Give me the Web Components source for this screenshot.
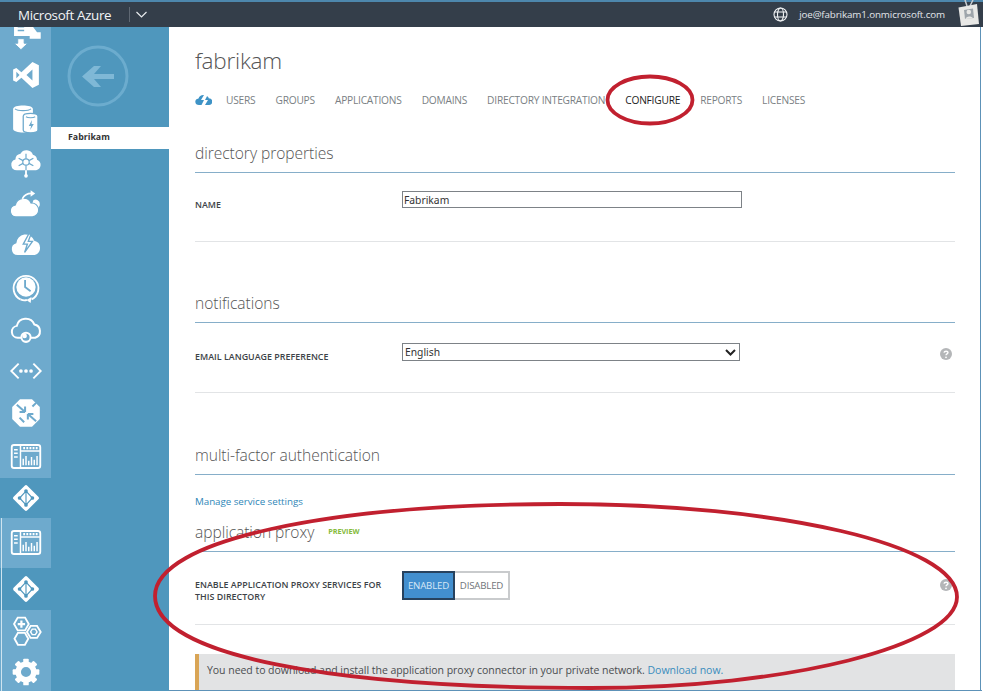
<!DOCTYPE html>
<html>
<head>
<meta charset="utf-8">
<title>fabrikam</title>
<style>
  html, body { margin: 0; padding: 0; height: 100%; overflow: hidden; background: #fff; }
  body { font-family: "Open Sans", "Noto Sans", sans-serif; color: #444; }
</style>
</head>
<body>
<az-portal>
  <az-topbar slot="top" email="joe@fabrikam1.onmicrosoft.com"></az-topbar>
  <az-rail slot="rail"></az-rail>
  <az-subnav slot="nav" current="Fabrikam"></az-subnav>

  <az-title>fabrikam</az-title>
  <az-tabs active="CONFIGURE" items="USERS,GROUPS,APPLICATIONS,DOMAINS,DIRECTORY INTEGRATION,CONFIGURE,REPORTS,LICENSES"></az-tabs>

  <az-section heading="directory properties" gap="33">
    <az-row label="NAME" height="69" pad="18">
      <az-field value="Fabrikam"></az-field>
    </az-row>
  </az-section>

  <az-section heading="notifications" gap="51">
    <az-row label="EMAIL LANGUAGE PREFERENCE" height="70" pad="20" help="2">
      <az-field value="English" select></az-field>
    </az-row>
  </az-section>

  <az-section heading="multi-factor authentication" gap="52">
    <az-link>Manage service settings</az-link>
  </az-section>

  <az-section heading="application proxy" gap="10" preview>
    <az-row label="ENABLE APPLICATION PROXY SERVICES FOR THIS DIRECTORY" height="73" pad="19" help="8">
      <az-toggle on="ENABLED" off="DISABLED"></az-toggle>
    </az-row>
  </az-section>

  <az-banner>You need to download and install the application proxy connector in your private network. <a>Download now.</a></az-banner>

  <az-annotations slot="over"></az-annotations>
</az-portal>

<script>
// icons for the left rail, drawn on a 34x34 box
const dash = `<rect x="1.500" y="4" width="31" height="25" rx="2.500" fill="none" stroke="#fff" stroke-width="2"/>
  <path d="M11 4v25M11 10.500h21" stroke="#fff" stroke-width="1.600" fill="none"/>
  <path d="M14 7.300h16" stroke="#fff" stroke-width="2.400" stroke-dasharray="2 1.400"/>
  <path d="M4 9h4M4 13h4M4 17h4M14 26v-7M17 26v-10M20 26v-5M23 26v-9M26 26v-6M29 26v-10" stroke="#fff" stroke-width="1.600"/>`;
const diamond = `<rect x="6.500" y="6.500" width="21" height="21" rx="2" transform="rotate(45 17 17)" fill="#fff"/>
  <path d="M17 9.500L10 17 17 24.500 24 17ZM17 9.500V24.500" fill="none" stroke="#4f97bd" stroke-width="1.200"/>
  <circle cx="17" cy="9.500" r="2" fill="#4f97bd"/><circle cx="10" cy="17" r="2" fill="#4f97bd"/>
  <circle cx="24" cy="17" r="2" fill="#4f97bd"/><circle cx="17" cy="24.500" r="2" fill="#4f97bd"/>`;
const ICONS = {
  deploy: `<path d="M4 -3h15v9h4l6 8h4v7H21v-3H4z" fill="#fff"/><path d="M8 4h7M8 8h7M8 12h7" stroke="#6eaacd" stroke-width="1.600"/>
    <path d="M8 21h7v5h4l-7.500 7L4 26h4z" fill="#fff" stroke="#6eaacd" stroke-width="1"/>`,
  vs: `<path fill-rule="evenodd" fill="#fff" d="M24 3l7 3.500v21L24 31 12 20l-5.500 4.500L3 23V11l3.500-1.500L12 14zM24 11l-6.500 6 6.500 6zM6.500 13.500v7L10 17z"/>`,
  db: `<path d="M3 6c0-5 21.500-5 21.500 0v22c0 5-21.500 5-21.500 0z" fill="#fff"/><path d="M5 6c3 2.500 14.500 2.500 17.500 0" stroke="#6eaacd" fill="none" stroke-width="1.200"/>
    <path d="M14 14c0-4 16-4 16 0v15c0 4-16 4-16 0z" fill="#fff" stroke="#6eaacd" stroke-width="1.400"/>
    <path d="M17 14.500c2 1.500 8 1.500 10 0" stroke="#6eaacd" fill="none" stroke-width="1.200"/><path d="M23.500 18l-3.500 6.500h2.500l-1 4.500 4-6.500H23z" fill="#6eaacd"/>`,
  hub: `<path d="M7 26a6 6 0 0 1-1.500-11.800A6.500 6.500 0 0 1 11 8 7.500 7.500 0 0 1 24.500 9 6 6 0 0 1 29 14.500 6 6 0 0 1 28 26z" fill="#fff"/>
    <g stroke="#6eaacd" stroke-width="1.300" fill="none"><circle cx="17" cy="17" r="3.500"/><path d="M17 13.500V8M17 20.500V26M13.800 15.500L9 13M20.200 15.500L25 13M13.800 18.500L9 21M20.200 18.500L25 21"/></g>
    <path d="M17 26v5" stroke="#fff" stroke-width="2"/><circle cx="17" cy="32" r="2" fill="#fff"/>`,
  clouds: `<path d="M25 13a4.500 4.500 0 0 1 7 4 4.500 4.500 0 0 1-3 4.500H22z" fill="#fff"/>
    <path d="M6 31a6.500 6.500 0 0 1-.5-12.900A9 9 0 0 1 22.500 16 7.500 7.500 0 0 1 24 31z" fill="#fff" stroke="#6eaacd" stroke-width="1.200"/>
    <path d="M13 11.500c2-4 5.500-6 10-6" fill="none" stroke="#fff" stroke-width="1.800"/><path d="M22 2l5 3.500-5 3.500z" fill="#fff"/>`,
  bolt: `<path d="M8 28a6.500 6.500 0 0 1-1.500-12.800A10 10 0 0 1 26 12.500 8 8 0 0 1 26.500 28z" fill="#fff"/>
    <path d="M20 5l-6 11h4.500l-3 9 8.500-12h-4.500l3-8z" fill="#fff" stroke="#6eaacd" stroke-width="1.500"/>`,
  clock: `<path d="M11 30.500A13.500 13.500 0 1 1 23 30.500" fill="none" stroke="#fff" stroke-width="2"/><circle cx="17" cy="17" r="10.500" fill="#fff"/>
    <path d="M16 9.500V17l6 4.500" fill="none" stroke="#6eaacd" stroke-width="2"/><path d="M23 28l-5.500 3 4.500 3.500z" fill="#fff"/><path d="M11 30.500c3 1.300 5 1.300 7 .5" stroke="#fff" stroke-width="2" fill="none"/>`,
  hybrid: `<path d="M12 26.500H8a6.500 6.500 0 0 1-1-12.900A10 10 0 0 1 26 12a7.500 7.500 0 0 1 1 14.500h-5" fill="none" stroke="#fff" stroke-width="2.200"/>
    <circle cx="17" cy="26" r="5" fill="none" stroke="#fff" stroke-width="2.200"/><circle cx="15.500" cy="24.500" r="2.500" fill="#fff"/>`,
  api: `<path d="M9 9l-8 8 8 8M25 9l8 8-8 8" fill="none" stroke="#fff" stroke-width="2"/><circle cx="11.500" cy="17" r="2" fill="#fff"/><circle cx="17" cy="17" r="2" fill="#fff"/><circle cx="22.500" cy="17" r="2" fill="#fff"/>`,
  traffic: `<path d="M10.500 2h13L32 10.500v13L23.500 32h-13L2 23.500v-13z" fill="#fff"/>
    <path d="M7 8l9 8M16 16v-6M16 16h-6M28 26l-9-8M19 18v6M19 18h6M15 27l-5-5M24 10l4-4" fill="none" stroke="#6eaacd" stroke-width="2.200"/>`,
  dash,
  diamond,
  apps: `<g fill="none" stroke="#fff" stroke-width="2"><path d="M4 9.400L8 2.500h8l4 6.900-4 6.900H8z"/><path d="M18 18l4-6.500h7l4 6.500-4 6.500h-7z"/><path d="M4.500 25.500L8.200 19h7.600l3.700 6.500-3.700 6.500H8.200z"/><path d="M22 18l1.800-3h3.400l1.800 3-1.800 3h-3.400z" stroke-width="1.500"/></g><path d="M12 5.500v8M8 9.500h8" stroke="#fff" stroke-width="2.400"/>`,
  gear: `<g fill="#fff">${[0,45,90,135,180,225,270,315].map(a => `<rect x="14" y="2.500" width="6" height="6" rx="1" transform="rotate(${a} 17 17)"/>`).join("")}</g><circle cx="17" cy="17" r="8.500" fill="none" stroke="#fff" stroke-width="6"/>`,
};

const RAIL = [
  ["deploy", 25, "", 0], ["vs", 45], ["db", 43], ["hub", 43], ["clouds", 42], ["bolt", 40], ["clock", 43],
  ["hybrid", 42], ["api", 41], ["traffic", 44], ["dash", 43], ["diamond", 40, "sel"], ["dash", 50], ["diamond", 42, "sel"], ["apps", 42], ["gear", 39],
];

class AzPortal extends HTMLElement {
  constructor() {
    super();
    this.attachShadow({ mode: "open" }).innerHTML = `
    <style>
      :host { display: grid; grid-template: 27px 1fr / 51px 118px 1fr; height: 691px; width: 983px; position: relative; overflow: hidden; background: #fff; }
      .top { grid-column: 1 / 4; }
      main { padding: 0 25px 0 26px; margin-right: 2px; border-right: 1px solid #5d92b8; overflow: hidden; min-width: 0; }
      .bottom { position: absolute; left: 169px; right: 1px; bottom: 0; height: 1px; background: #5d92b8; }
    </style>
    <div class="top"><slot name="top"></slot></div>
    <slot name="rail"></slot>
    <slot name="nav"></slot>
    <main><slot></slot></main>
    <div class="bottom"></div>
    <slot name="over"></slot>`;
  }
}

class AzTopbar extends HTMLElement {
  constructor() {
    super();
    this.attachShadow({ mode: "open" }).innerHTML = `
    <style>
      :host { display: flex; align-items: center; height: 27px; box-sizing: border-box; background: #343e4a; border-top: 2px solid #4d87ad; color: #f2f4f6; overflow: visible; }
      .brand { font-size: 13.400px; margin-left: 18px; width: 111px; letter-spacing: -.35px; white-space: nowrap; }
      .sep { width: 1px; height: 15px; background: #5f6873; }
      .chev { margin-left: 6px; }
      .right { margin-left: auto; display: flex; align-items: center; }
      .mail { font-size: 9.800px; margin: 0 12px 0 11px; letter-spacing: -.12px; color: #e3e6ea; white-space: nowrap; }
      .badge { margin-right: 3px; margin-top: -2px; }
    </style>
    <span class="brand">Microsoft Azure</span><span class="sep"></span>
    <svg class="chev" width="11" height="7" viewBox="0 0 11 7"><path d="M.5 1l5 5 5-5" fill="none" stroke="#e8ebee" stroke-width="1.200"/></svg>
    <div class="right">
      <svg width="15" height="15" viewBox="0 0 15 15" fill="none" stroke="#f2f4f6" stroke-width="1.100"><circle cx="7.500" cy="7.500" r="6.500"/><ellipse cx="7.500" cy="7.500" rx="3" ry="6.500"/><path d="M1.500 5h12M1.500 10h12"/></svg>
      <span class="mail">${this.getAttribute("email")}</span>
      <svg class="badge" width="23" height="27" viewBox="0 0 23 27"><path d="M10 6L8 0M13 6l3-6" stroke="#c8ccd0" stroke-width="1.500"/><path d="M1.500 7.500L20 4l2 20-18 2z" fill="#e8e8e6"/><path d="M7 10l9-1.500 1 9.500-9 1z" fill="#9ea5ab"/><circle cx="11.800" cy="12" r="2.300" fill="#e8e8e6"/><path d="M8.500 19c.3-3 6-3.500 7.500-.7z" fill="#e8e8e6"/></svg>
    </div>`;
  }
}

class AzRail extends HTMLElement {
  constructor() {
    super();
    const items = RAIL.map(([name, h, cls = "", center = 1]) => `
      <div class="item ${cls}" style="height:${h}px;${center ? "" : "align-items:flex-end"}">
        <svg width="34" height="34" viewBox="0 0 34 34" style="overflow:visible">${ICONS[name]}</svg>
      </div>`).join("");
    this.attachShadow({ mode: "open" }).innerHTML = `
    <style>
      :host { display: block; background: #6eaacd; overflow: hidden; min-height: 0; position: relative; }
      .item { display: flex; align-items: center; justify-content: center; overflow: hidden; }
      .item.sel { background: #4f97bd; }
      .item svg { flex: none; transform: scale(.92); }
      .edge { position: absolute; left: 1px; top: 491px; bottom: 0; width: 1px; background: #cfe4ef; }
    </style>
    ${items}<div class="edge"></div>`;
  }
}

class AzSubnav extends HTMLElement {
  constructor() {
    super();
    this.attachShadow({ mode: "open" }).innerHTML = `
    <style>
      :host { display: block; background: #4f97bd; }
      .back { display: block; margin: 18px 0 0 16px; }
      .cur { margin-top: 20px; height: 22px; background: #fff; font-size: 8.800px; font-weight: 700; line-height: 21px; padding-left: 17px; color: #333; }
    </style>
    <svg class="back" width="62" height="62" viewBox="0 0 62 62"><circle cx="31" cy="31" r="29" fill="none" stroke="#6cacce" stroke-width="3"/><path d="M47 29H27l7-8h-7L15 31.500 27 42h7l-7-8h20z" fill="#7fb8d6"/></svg>
    <div class="cur">${this.getAttribute("current")}</div>`;
  }
}

class AzTitle extends HTMLElement {
  constructor() {
    super();
    this.attachShadow({ mode: "open" }).innerHTML = `
    <style>:host { display: block; font-size: 22.500px; font-weight: 300; color: #555; line-height: 30px; padding-top: 19px; letter-spacing: -.2px; }</style>
    <slot></slot>`;
  }
}

class AzTabs extends HTMLElement {
  constructor() {
    super();
    const active = this.getAttribute("active");
    const tabs = this.getAttribute("items").split(",").map(t => `<span class="${t === active ? "on" : ""}">${t}</span>`).join("");
    this.attachShadow({ mode: "open" }).innerHTML = `
    <style>
      :host { display: flex; align-items: center; gap: 20px; height: 20px; margin-top: 14px; font-size: 10.200px; letter-spacing: -.22px; color: #7a7f84; white-space: nowrap; }
      svg { margin-right: -6px; }
      .on { color: #222; }
    </style>
    <svg width="17" height="10" viewBox="0 0 17 12" preserveAspectRatio="none"><path d="M4 12a4 4 0 0 1-.5-7.900A5.500 5.500 0 0 1 9 0l-3 6h3l-2.500 6zM10 12l3-6h-3l2-4.500c1 .5 1.500 1.200 1.700 2.500A4 4 0 0 1 13 12z" fill="#3e93c6"/></svg>
    ${tabs}`;
  }
}

class AzSection extends HTMLElement {
  constructor() {
    super();
    const preview = this.hasAttribute("preview") ? `<b>PREVIEW</b>` : "";
    this.attachShadow({ mode: "open" }).innerHTML = `
    <style>
      :host { display: block; margin-top: ${this.getAttribute("gap")}px; }
      header { height: 20px; padding-bottom: 9px; border-bottom: 1px solid #86aec9; font-size: 15.600px; line-height: 20px; font-weight: 300; color: #555; display: flex; letter-spacing: -.05px; }
      b { font-size: 7.300px; line-height: 12px; color: #86bb3c; font-weight: 700; margin: 3px 0 0 14px; letter-spacing: -.1px; }
    </style>
    <header><span>${this.getAttribute("heading")}</span>${preview}</header>
    <slot></slot>`;
  }
}

class AzRow extends HTMLElement {
  constructor() {
    super();
    const helpTop = this.getAttribute("help");
    const help = helpTop ? `
      <svg style="margin-top:${helpTop}px" width="12" height="12" viewBox="0 0 12 12"><circle cx="6" cy="6" r="6" fill="#b4b6b8"/><path d="M4 4.600C4.300 2.700 8 2.700 8 4.600 8 6 6 5.800 6 7.300" fill="none" stroke="#fff" stroke-width="1.400"/><circle cx="6" cy="9.300" r=".9" fill="#fff"/></svg>` : "";
    this.attachShadow({ mode: "open" }).innerHTML = `
    <style>
      :host { display: grid; grid-template-columns: 207px 1fr 15px; box-sizing: border-box; height: ${this.getAttribute("height")}px; padding-top: ${this.getAttribute("pad")}px; border-bottom: 1px solid #e2e4e6; }
      label { font-size: 8.900px; font-weight: 600; color: #3d4348; line-height: 12px; letter-spacing: .02px; width: 195px; padding-top: 8px; }
    </style>
    <label>${this.getAttribute("label")}</label>
    <div><slot></slot></div>
    <div>${help}</div>`;
  }
}

class AzField extends HTMLElement {
  constructor() {
    super();
    const select = this.hasAttribute("select");
    this.attachShadow({ mode: "open" }).innerHTML = `
    <style>
      :host { display: flex; align-items: center; justify-content: space-between; box-sizing: border-box; width: ${select ? 338 : 340}px; height: ${select ? 18 : 17}px; border: 1px solid #7d8287; padding: 0 3px 0 ${select ? 2 : 1}px; font-size: 10.300px; color: #333; font-family: "Noto Sans", sans-serif; }
    </style>
    <span>${this.getAttribute("value")}</span>
    ${select ? `<svg width="11" height="7" viewBox="0 0 11 7"><path d="M1 1l4.500 4.500L10 1" fill="none" stroke="#222" stroke-width="2"/></svg>` : ""}`;
  }
}

class AzToggle extends HTMLElement {
  constructor() {
    super();
    this.attachShadow({ mode: "open" }).innerHTML = `
    <style>
      :host { display: flex; height: 29px; width: 108px; font-size: 9.700px; letter-spacing: -.2px; line-height: 29px; text-align: center; }
      .on { flex: 0 0 53px; box-sizing: border-box; background: #428fcf; border: 2px solid #27425e; color: #d6e7f6; line-height: 25px; }
      .off { flex: 1; box-sizing: border-box; border: 1px solid #c9cbcd; border-width: 2px 2px 2px 0; color: #6f7479; line-height: 25px; }
    </style>
    <span class="on">${this.getAttribute("on")}</span><span class="off">${this.getAttribute("off")}</span>`;
  }
}

class AzLink extends HTMLElement {
  constructor() {
    super();
    this.attachShadow({ mode: "open" }).innerHTML = `
    <style>:host { display: block; font-size: 9.800px; color: #2f87b8; padding-top: 19px; line-height: 16px; height: 18px; letter-spacing: -.05px; }</style>
    <slot></slot>`;
  }
}

class AzBanner extends HTMLElement {
  constructor() {
    super();
    this.attachShadow({ mode: "open" }).innerHTML = `
    <style>
      :host { display: block; margin-top: 29px; height: 37px; box-sizing: border-box; background: #e2e3e4; border-left: 4px solid #d9a556; padding-left: 8px; font-size: 10.540px; line-height: 32px; color: #4a4d50; letter-spacing: -.05px; white-space: nowrap; }
      ::slotted(a) { color: #3a8dbd; }
    </style>
    <slot></slot>`;
  }
}

// the red rings someone drew over the screenshot
class AzAnnotations extends HTMLElement {
  constructor() {
    super();
    this.attachShadow({ mode: "open" }).innerHTML = `
    <style>
      :host { position: absolute; inset: 0; pointer-events: none; }
      svg { display: block; }
    </style>
    <svg width="983" height="691" viewBox="0 0 983 691" fill="none" stroke="#c1202f" stroke-width="3.800">
      <ellipse cx="650" cy="100" rx="42.500" ry="23.500"/>
      <path d="M155 596C155 540 330 504 560 504C780 504 957 545 957 597C957 645 790 688 590 688C330 688 155 655 155 596Z"/>
    </svg>`;
  }
}

customElements.define("az-portal", AzPortal);
customElements.define("az-topbar", AzTopbar);
customElements.define("az-rail", AzRail);
customElements.define("az-subnav", AzSubnav);
customElements.define("az-title", AzTitle);
customElements.define("az-tabs", AzTabs);
customElements.define("az-section", AzSection);
customElements.define("az-row", AzRow);
customElements.define("az-field", AzField);
customElements.define("az-toggle", AzToggle);
customElements.define("az-link", AzLink);
customElements.define("az-banner", AzBanner);
customElements.define("az-annotations", AzAnnotations);
</script>
</body>
</html>
